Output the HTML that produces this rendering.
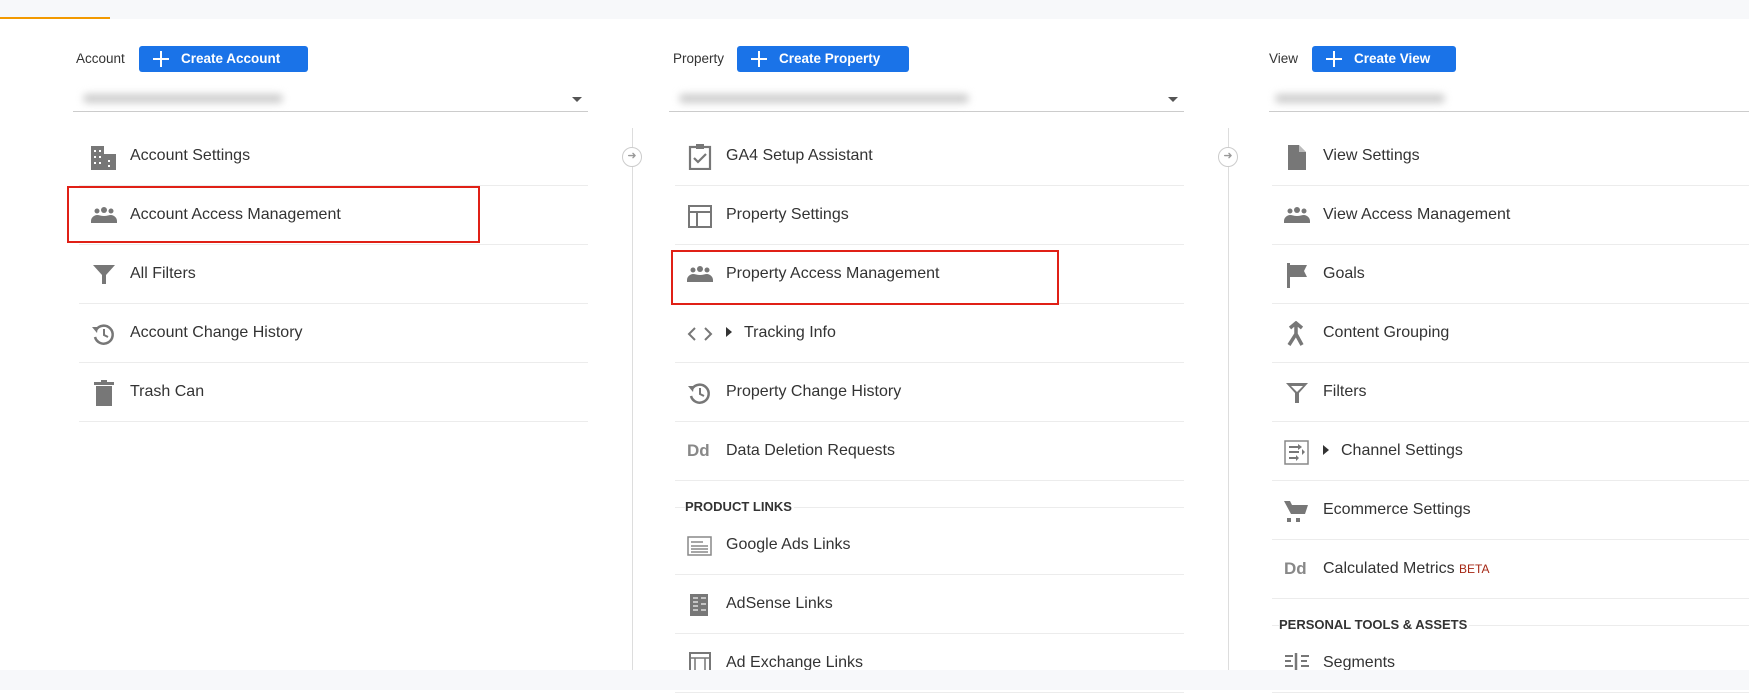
<!DOCTYPE html>
<html><head><meta charset="utf-8"><style>
*{box-sizing:border-box;margin:0;padding:0}
body{width:1749px;height:690px;overflow:hidden;background:#fff;font-family:"Liberation Sans",sans-serif;color:#333;position:relative}
.top{position:absolute;left:0;top:0;width:1749px;height:19px;background:#f7f8fa}
.orange{position:absolute;left:0;top:17px;width:110px;height:2px;background:#f29900}
.bot{position:absolute;left:0;top:670px;width:1749px;height:20px;background:#f7f8fa;z-index:5}
.lbl{position:absolute;top:51px;font-size:13.5px;color:#333}
.btn{position:absolute;top:46px;height:26px;background:#1a73e8;border-radius:3px;color:#fff;font-weight:bold;font-size:13.5px;line-height:26px;padding-left:42px}
.btn:before{content:"";position:absolute;left:14px;top:12px;width:16px;height:2px;background:#fff}
.btn:after{content:"";position:absolute;left:21px;top:5px;width:2px;height:16px;background:#fff}
.dd{position:absolute;top:84px;height:28px;border-bottom:1px solid #ccc}
.blur{position:absolute;left:10px;top:10px;height:9px;background:#ccc;filter:blur(4px);border-radius:5px}
.caret{position:absolute;right:6px;top:13px;border-left:5px solid transparent;border-right:5px solid transparent;border-top:5px solid #555}
.vline{position:absolute;top:128px;width:1px;height:560px;background:#ddd}
.circ{position:absolute;top:147px;width:20px;height:20px;border:1.5px solid #ccc;border-radius:50%;background:#fff;color:#999;font-size:11px;text-align:center;line-height:17px}
.col{position:absolute;top:127px}
.row{position:relative;height:59px;border-bottom:1px solid #ececec;font-size:16px;line-height:58px}
.row .t{position:absolute;left:51px;top:0;white-space:nowrap}
.row svg{position:absolute;left:11px;top:17px}
.hdr{position:relative;height:35px;border-bottom:0}
.hdr span{position:absolute;left:10px;top:18px;font-size:13px;font-weight:bold;background:#fff;padding-right:2px;color:#333}
.hdr:before{content:"";position:absolute;left:0;right:0;top:26px;height:1px;background:#ececec}
.red{position:absolute;border:2px solid #e02016}
.tri{display:inline-block;border-top:5px solid transparent;border-bottom:5px solid transparent;border-left:6px solid #333;margin-right:12px;vertical-align:0}
.beta{color:#a52714;font-size:12px}
</style></head><body>
<div class="top"></div><div class="orange"></div>

<!-- Column 1 -->
<div class="lbl" style="left:76px">Account</div>
<div class="btn" style="left:139px;width:169px">Create Account</div>
<div class="dd" style="left:73px;width:515px"><div class="blur" style="width:200px"></div><div class="caret"></div></div>
<div class="col" style="left:79px;width:509px">
 <div class="row"><svg width="28" height="26" viewBox="0 0 28 26"><path fill="#777" d="M1 2h13v24H1zM14 10h12v16H14z"/><g fill="#fff"><rect x="4" y="6" width="2" height="2"/><rect x="9" y="6" width="2" height="2"/><rect x="4" y="12" width="2" height="2"/><rect x="9" y="12" width="2" height="2"/><rect x="4" y="18" width="2" height="2"/><rect x="9" y="18" width="2" height="2"/><rect x="18" y="16" width="2" height="2"/><rect x="18" y="21" width="2" height="2"/></g></svg><span class="t">Account Settings</span></div>
 <div class="row"><svg width="28" height="26" viewBox="0 0 28 26"><g fill="#777"><circle cx="7" cy="8" r="2.5"/><circle cx="14" cy="7" r="3"/><circle cx="21" cy="8" r="2.5"/><path d="M1 18c0-4 4-6 6-6s4 1 7 1 5-1 7-1 6 2 6 6v2H1z"/></g></svg><span class="t">Account Access Management</span></div>
 <div class="row"><svg width="28" height="26" viewBox="0 0 28 26"><path fill="#777" d="M3 3h22l-9 10v9h-4v-9z"/></svg><span class="t">All Filters</span></div>
 <div class="row"><svg width="28" height="26" viewBox="0 0 28 26"><path fill="none" stroke="#777" stroke-width="2.5" d="M6 9a9 9 0 1 1-1 7"/><path fill="#777" d="M2 6l6 0-1 6z"/><path fill="none" stroke="#777" stroke-width="2" d="M14 8v6l4 2"/></svg><span class="t">Account Change History</span></div>
 <div class="row"><svg width="28" height="26" viewBox="0 0 28 26"><path fill="#777" d="M4 2h20v3H4zM11 0h6v2h-6zM6 6h16v20H6z"/></svg><span class="t">Trash Can</span></div>
</div>
<div class="red" style="left:67px;top:186px;width:413px;height:57px"></div>

<div class="vline" style="left:632px"></div>
<div class="circ" style="left:622px">➜</div>

<!-- Column 2 -->
<div class="lbl" style="left:673px">Property</div>
<div class="btn" style="left:737px;width:172px">Create Property</div>
<div class="dd" style="left:669px;width:515px"><div class="blur" style="width:290px"></div><div class="caret"></div></div>
<div class="col" style="left:675px;width:509px">
 <div class="row"><svg width="28" height="26" viewBox="0 0 28 26"><rect x="4" y="3" width="20" height="22" fill="none" stroke="#777" stroke-width="2.2"/><rect x="10" y="0" width="8" height="5" fill="#777"/><path d="M8 14l4 4 8-8" fill="none" stroke="#777" stroke-width="2.2"/></svg><span class="t">GA4 Setup Assistant</span></div>
 <div class="row"><svg width="28" height="26" viewBox="0 0 28 26"><rect x="3" y="3" width="22" height="21" fill="none" stroke="#777" stroke-width="2"/><path d="M3 9h22M11 9v15" stroke="#777" stroke-width="2"/></svg><span class="t">Property Settings</span></div>
 <div class="row"><svg width="28" height="26" viewBox="0 0 28 26"><g fill="#777"><circle cx="7" cy="8" r="2.5"/><circle cx="14" cy="7" r="3"/><circle cx="21" cy="8" r="2.5"/><path d="M1 18c0-4 4-6 6-6s4 1 7 1 5-1 7-1 6 2 6 6v2H1z"/></g></svg><span class="t">Property Access Management</span></div>
 <div class="row"><svg width="28" height="26" viewBox="0 0 28 26"><path d="M9 7l-6 6 6 6M19 7l6 6-6 6" fill="none" stroke="#777" stroke-width="2"/></svg><span class="t"><span class="tri"></span>Tracking Info</span></div>
 <div class="row"><svg width="28" height="26" viewBox="0 0 28 26"><path fill="none" stroke="#777" stroke-width="2.5" d="M6 9a9 9 0 1 1-1 7"/><path fill="#777" d="M2 6l6 0-1 6z"/><path fill="none" stroke="#777" stroke-width="2" d="M14 8v6l4 2"/></svg><span class="t">Property Change History</span></div>
 <div class="row"><span style="position:absolute;left:12px;top:0;font-weight:bold;color:#888;font-size:17px">Dd</span><span class="t">Data Deletion Requests</span></div>
 <div class="hdr"><span>PRODUCT LINKS</span></div>
 <div class="row"><svg width="28" height="26" viewBox="0 0 28 26"><rect x="2" y="4" width="23" height="18" fill="none" stroke="#888" stroke-width="1.5"/><path d="M5 9h12M5 13h17M5 16h17M5 19h17" stroke="#888" stroke-width="1.6"/></svg><span class="t">Google Ads Links</span></div>
 <div class="row"><svg width="28" height="26" viewBox="0 0 28 26"><rect x="4" y="2" width="18" height="22" fill="#777"/><path d="M7 6h5M7 10h5M7 14h5M7 18h5M15 6h5M15 12h5M15 18h5" stroke="#ddd" stroke-width="1.5"/></svg><span class="t">AdSense Links</span></div>
 <div class="row"><svg width="28" height="26" viewBox="0 0 28 26"><rect x="4" y="2" width="20" height="26" fill="none" stroke="#777" stroke-width="2"/><path d="M4 7h20M9 7v20M19 7v20" stroke="#777" stroke-width="1.5"/></svg><span class="t">Ad Exchange Links</span></div>
</div>
<div class="red" style="left:671px;top:250px;width:388px;height:55px"></div>

<div class="vline" style="left:1228px"></div>
<div class="circ" style="left:1218px">➜</div>

<!-- Column 3 -->
<div class="lbl" style="left:1269px">View</div>
<div class="btn" style="left:1312px;width:144px">Create View</div>
<div class="dd" style="left:1265px;width:484px;border:0"><div class="blur" style="width:170px"></div></div>
<div style="position:absolute;left:1269px;top:111px;width:480px;height:1px;background:#ccc"></div>
<div class="col" style="left:1272px;width:477px">
 <div class="row"><svg width="28" height="26" viewBox="0 0 28 26"><path fill="#777" d="M5 1h11l7 7v18H5z"/><path fill="#fff" d="M16 1v7h7z" opacity=".5"/></svg><span class="t">View Settings</span></div>
 <div class="row"><svg width="28" height="26" viewBox="0 0 28 26"><g fill="#777"><circle cx="7" cy="8" r="2.5"/><circle cx="14" cy="7" r="3"/><circle cx="21" cy="8" r="2.5"/><path d="M1 18c0-4 4-6 6-6s4 1 7 1 5-1 7-1 6 2 6 6v2H1z"/></g></svg><span class="t">View Access Management</span></div>
 <div class="row"><svg width="28" height="26" viewBox="0 0 28 26"><path fill="#777" d="M4 1h3v25H4zM7 3h17l-3 6 3 6H7z"/></svg><span class="t">Goals</span></div>
 <div class="row"><svg width="28" height="26" viewBox="0 0 28 26"><path fill="none" stroke="#777" stroke-width="3.5" d="M7 7l6-5 6 5M13 3v10l-7 11M13 13l6 11"/></svg><span class="t">Content Grouping</span></div>
 <div class="row"><svg width="28" height="26" viewBox="0 0 28 26"><path fill="#777" d="M3 3h22l-9 10v10h-4V13z"/><path fill="#fff" d="M8 6h12l-6 6z"/></svg><span class="t">Filters</span></div>
 <div class="row"><svg width="28" height="26" viewBox="0 0 28 26"><rect x="2" y="2" width="23" height="23" fill="none" stroke="#888" stroke-width="1.5"/><path d="M6 8h9M6 13h10M6 19h7" stroke="#777" stroke-width="2"/><path d="M15 5l4 3-4 3zM19 10l3 3-3 3zM13 16l3 3-3 3z" fill="#777"/></svg><span class="t"><span class="tri"></span>Channel Settings</span></div>
 <div class="row"><svg width="28" height="26" viewBox="0 0 28 26"><path fill="#777" d="M1 3h6l2 4h16l-3 9H8z"/><rect x="4" y="20" width="4" height="4" fill="#777"/><rect x="13" y="20" width="4" height="4" fill="#777"/></svg><span class="t">Ecommerce Settings</span></div>
 <div class="row"><span style="position:absolute;left:12px;top:0;font-weight:bold;color:#888;font-size:17px">Dd</span><span class="t">Calculated Metrics <span class="beta">BETA</span></span></div>
 <div class="hdr"><span style="left:7px">PERSONAL TOOLS &amp; ASSETS</span></div>
 <div class="row"><svg width="28" height="26" viewBox="0 0 28 26"><path d="M2 5h8M2 10h6M2 15h8M2 20h6M18 5h8M18 10h6M18 15h8M18 20h6" stroke="#777" stroke-width="2"/><path d="M13 2v24" stroke="#777" stroke-width="2.5"/></svg><span class="t">Segments</span></div>
</div>

<div class="bot"></div>
</body></html>
